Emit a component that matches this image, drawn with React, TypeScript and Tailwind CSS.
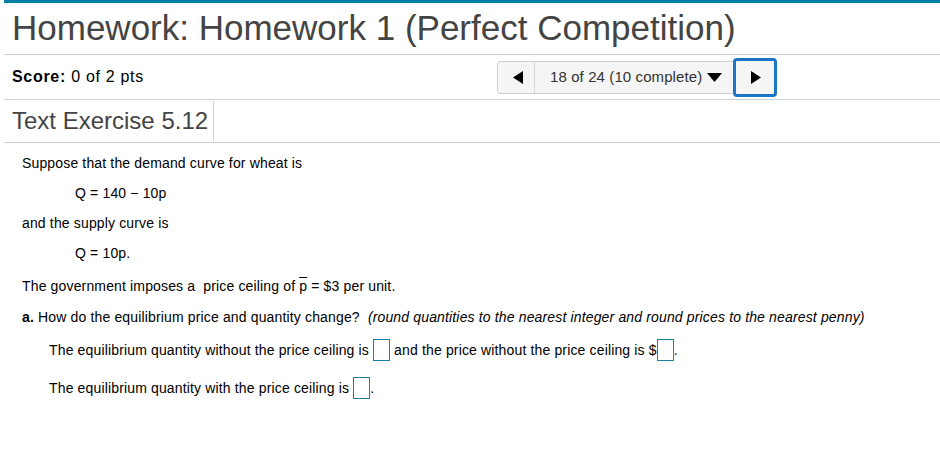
import React from "react";

const Box = () => (
  <span className="inline-block w-[17px] h-[22px] border border-[#1b7fa6] bg-white align-middle" />
);

export default function App() {
  return (
    <div className="w-[940px] h-[469px] bg-white pl-1 overflow-hidden" style={{ fontFamily: '"Liberation Sans", Arial, sans-serif' }}>
      <div className="h-[3px] bg-[#007fa3]" />
      <div className="h-[52px] flex items-center pl-2 border-b border-[#ccd0d9]">
        <h1 className="text-[35px] leading-[40px] text-[#444] mt-[-2px]">Homework: Homework 1 (Perfect Competition)</h1>
      </div>
      <div className="h-[45px] flex items-center pl-2 border-b border-[#ccd0d9]">
        <div className="w-[485px] text-[16px] tracking-[0.7px] text-black">
          <span className="font-bold">Score:</span> 0 of 2 pts
        </div>
        <div className="flex items-center">
          <div className="h-[33px] flex items-stretch border border-[#cfcfcf] rounded-l-[3px] bg-[#f5f5f5]">
            <div className="w-[37px] flex items-center justify-center border-r border-[#d6d6d6] pl-[4px]">
              <svg width="10" height="13" viewBox="0 0 10 13"><path d="M10 0 L0 6.5 L10 13 Z" fill="#000" /></svg>
            </div>
            <div className="w-[198px] flex items-center pl-[15px] text-[15px] tracking-[0.1px] text-[#333]">
              <span>18 of 24 (10 complete)</span>
              <svg className="ml-[5px]" width="15" height="9" viewBox="0 0 15 9"><path d="M0 0 L15 0 L7.5 9 Z" fill="#000" /></svg>
            </div>
          </div>
          <div className="w-[44px] h-[39px] ml-[-1px] flex items-center justify-center border-[3px] border-[#1d75c7] rounded-[4px] bg-[#f5f5f5] pl-[2px]">
            <svg width="10" height="13" viewBox="0 0 10 13"><path d="M0 0 L10 6.5 L0 13 Z" fill="#000" /></svg>
          </div>
        </div>
      </div>
      <div className="h-[43px] flex items-stretch border-b border-[#ccd0d9] py-[1px]">
        <div className="flex items-center pl-2 pr-[5px] border-r border-[#ccd0d9]">
          <span className="text-[24px] text-[#444]">Text Exercise 5.12</span>
        </div>
      </div>
      <div className="pl-[18px] text-[14px] tracking-[0.15px] leading-[16px] text-black">
        <div className="mt-[12px]">Suppose that the demand curve for wheat is</div>
        <div className="mt-[14px] pl-[53px]">Q = 140 − 10p</div>
        <div className="mt-[14px]">and the supply curve is</div>
        <div className="mt-[14px] pl-[53px]">Q = 10p.</div>
        <div className="mt-[17px]">
          The government imposes a&nbsp; price ceiling of <span className="overline">p</span> = $3 per unit.
        </div>
        <div className="mt-[15px]">
          <span className="font-bold">a.</span> How do the equilibrium price and quantity change?&nbsp; <i>(round quantities to the nearest integer and round prices to the nearest penny)</i>
        </div>
        <div className="mt-[14px] pl-[27px] h-[22px] flex items-center">
          <span>The equilibrium quantity without the price ceiling is&nbsp;</span>
          <Box />
          <span>&nbsp;and the price without the price ceiling is $</span>
          <Box />
          <span>.</span>
        </div>
        <div className="mt-[16px] pl-[27px] h-[22px] flex items-center">
          <span>The equilibrium quantity with the price ceiling is&nbsp;</span>
          <Box />
          <span>.</span>
        </div>
      </div>
    </div>
  );
}
